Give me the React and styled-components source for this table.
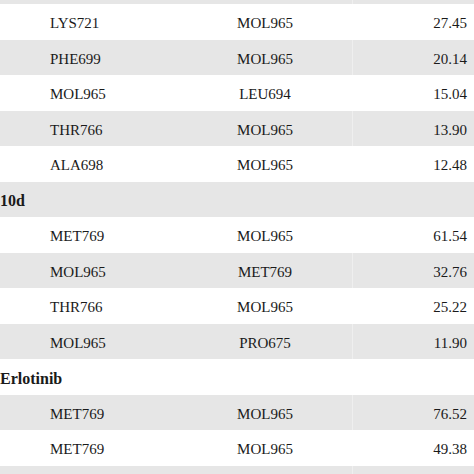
import React from "react";
import styled, { createGlobalStyle } from "styled-components";

const GlobalStyle = createGlobalStyle`
  html, body {
    margin: 0;
    padding: 0;
    background: #ffffff;
  }
`;

const rows = [
  { type: "pair", a: "", b: "", v: "" },
  { type: "pair", a: "LYS721", b: "MOL965", v: "27.45" },
  { type: "pair", a: "PHE699", b: "MOL965", v: "20.14" },
  { type: "pair", a: "MOL965", b: "LEU694", v: "15.04" },
  { type: "pair", a: "THR766", b: "MOL965", v: "13.90" },
  { type: "pair", a: "ALA698", b: "MOL965", v: "12.48" },
  { type: "group", label: "10d" },
  { type: "pair", a: "MET769", b: "MOL965", v: "61.54" },
  { type: "pair", a: "MOL965", b: "MET769", v: "32.76" },
  { type: "pair", a: "THR766", b: "MOL965", v: "25.22" },
  { type: "pair", a: "MOL965", b: "PRO675", v: "11.90" },
  { type: "group", label: "Erlotinib" },
  { type: "pair", a: "MET769", b: "MOL965", v: "76.52" },
  { type: "pair", a: "MET769", b: "MOL965", v: "49.38" },
  { type: "pair", a: "", b: "", v: "" },
];

const Page = styled.div`
  width: 474px;
  height: 474px;
  overflow: hidden;
`;

const Table = styled.div`
  margin-top: -31.5px;
  font-family: "Liberation Serif", "Times New Roman", serif;
  font-size: 15px;
  color: #1a1a1a;
`;

const Row = styled.div`
  display: grid;
  grid-template-columns: 178px 174px 122px;
  height: 35.5px;
  background: ${(p) => (p.$shaded ? "#e6e6e6" : "#ffffff")};
`;

const Cell = styled.div`
  display: flex;
  align-items: center;
  padding-top: 4px;
  box-sizing: border-box;
  justify-content: ${(p) =>
    p.$align === "right" ? "flex-end" : p.$align === "center" ? "center" : "flex-start"};
  padding-left: ${(p) => (p.$align === "left" ? "50px" : "0")};
  padding-right: ${(p) => (p.$align === "right" ? "7px" : "0")};
  border-left: ${(p) => (p.$divider ? "1px solid rgba(255,255,255,0.35)" : "none")};
`;

const GroupLabel = styled.div`
  grid-column: 1 / -1;
  display: flex;
  align-items: center;
  padding-top: 4px;
  box-sizing: border-box;
  font-weight: bold;
  font-size: 16px;
`;

export default function App() {
  return (
    <Page>
      <GlobalStyle />
      <Table>
        {rows.map((r, i) => (
          <Row key={i} $shaded={i % 2 === 0}>
            {r.type === "group" ? (
              <GroupLabel>{r.label}</GroupLabel>
            ) : (
              <>
                <Cell $align="left">{r.a}</Cell>
                <Cell $align="center">{r.b}</Cell>
                <Cell $align="right" $divider>{r.v}</Cell>
              </>
            )}
          </Row>
        ))}
      </Table>
    </Page>
  );
}
